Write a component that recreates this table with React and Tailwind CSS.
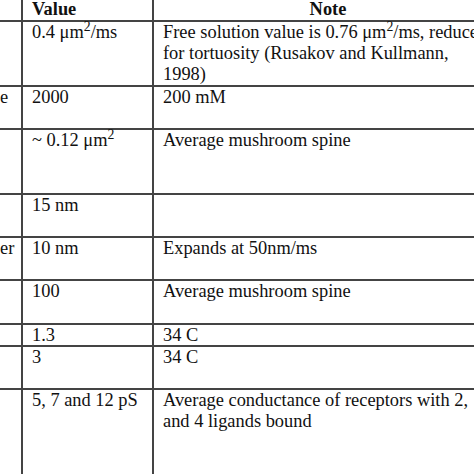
import React from "react";

const rows = [
  { h: "h-[65px]", c1: "", c2: <>0.4 μm<sup>2</sup>/ms</>, c3: <>Free solution value is 0.76 μm<sup>2</sup>/ms, reduced<br />for tortuosity (Rusakov and Kullmann,<br />1998)</> },
  { h: "h-[43px]", c1: "e", pr: "pr-[15px]", c2: "2000", c3: "200 mM" },
  { h: "h-[65px]", c1: "", c2: <>~ 0.12 μm<sup>2</sup></>, c3: "Average mushroom spine" },
  { h: "h-[43px]", c1: "", c2: "15 nm", c3: "" },
  { h: "h-[43px]", c1: "er", pr: "pr-[11px]", c2: "10 nm", c3: "Expands at 50nm/ms" },
  { h: "h-[44px]", c1: "", c2: "100", c3: "Average mushroom spine" },
  { h: "h-[22px]", c1: "", c2: "1.3", c3: "34 C" },
  { h: "h-[43px]", c1: "", c2: "3", c3: "34 C" },
  { h: "h-[120px]", c1: "", c2: "5, 7 and 12 pS", c3: <>Average conductance of receptors with 2,<br />and 4 ligands bound</>, last: true },
];

export default function App() {
  return (
    <div
      className="w-[474px] h-[474px] overflow-hidden bg-white text-[#111] text-[18.4px] leading-[21px]"
      style={{ fontFamily: '"Liberation Serif", "Times New Roman", serif' }}
    >
      <div className="w-[502px] mt-[-1px]">
        <div className="flex h-[23px] border-b-2 border-[#444]">
          <div className="w-[23px] shrink-0 border-r-2 border-[#444]" />
          <div className="w-[131px] shrink-0 border-r-2 border-[#444] pl-[9px] font-bold">Value</div>
          <div className="w-[348px] shrink-0 text-center font-bold">Note</div>
        </div>
        {rows.map((r, i) => (
          <div key={i} className={`flex ${r.h} ${r.last ? "" : "border-b-2"} border-[#444]`}>
            <div className={`w-[23px] shrink-0 border-r-2 border-[#444] overflow-hidden text-right whitespace-nowrap ${r.pr || ""}`}>
              {r.c1}
            </div>
            <div className="w-[131px] shrink-0 border-r-2 border-[#444] pl-[9px] whitespace-nowrap">{r.c2}</div>
            <div className="w-[348px] shrink-0 pl-[9px] whitespace-nowrap">{r.c3}</div>
          </div>
        ))}
      </div>
    </div>
  );
}
